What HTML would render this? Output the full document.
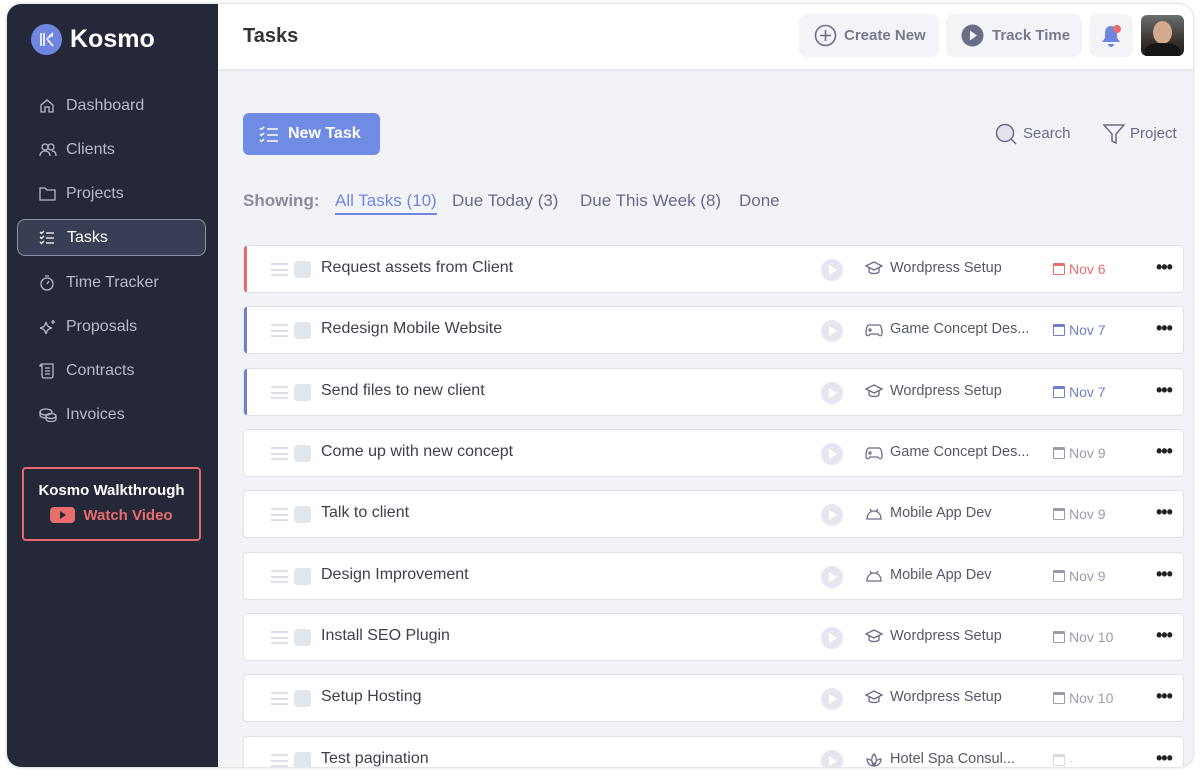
<!DOCTYPE html>
<html><head><meta charset="utf-8"><style>
*{box-sizing:border-box;margin:0;padding:0}
body{width:1200px;height:776px;background:#fff;font-family:"Liberation Sans",sans-serif;position:relative;overflow:hidden}
.frame{position:absolute;left:7px;top:4px;width:1186px;height:763px;border-radius:14px;overflow:hidden;background:#f2f3f7;box-shadow:0 0 3px rgba(0,0,0,.25)}
.side{position:absolute;left:0;top:0;width:211px;height:100%;background:#252838}
.logo{position:absolute;left:24px;top:20px;width:31px;height:31px;border-radius:50%;background:#6f86e0}
.brand{position:absolute;left:63px;top:21px;color:#fff;font-size:25px;font-weight:bold}
.nav{position:absolute;left:10px;width:189px;height:37px;color:#b6b9c8;font-size:16px;line-height:37px;padding-left:49px}
.nav svg{position:absolute;left:22px;top:11px}
.nav.act{background:#3a3e54;border:1px solid #8e92a6;border-radius:8px;color:#fff;line-height:35px}
.nav.act svg{left:21px;top:10px}
.walk{position:absolute;left:15px;top:463px;width:179px;height:74px;border:2px solid #e26a6a;border-radius:4px;text-align:center;color:#fff;font-weight:bold;font-size:15px;padding-top:13px}
.walk .wv{color:#e86d6d;margin-top:8px;font-size:15px}
.yt{display:inline-block;width:25px;height:16px;background:#e86d6d;border-radius:4px;vertical-align:-3px;margin-right:8px;position:relative}
.yt:after{content:"";position:absolute;left:10px;top:4px;border-left:6px solid #252838;border-top:4px solid transparent;border-bottom:4px solid transparent}
.head{position:absolute;left:211px;top:0;right:0;height:65px;background:#fff;box-shadow:0 1px 3px rgba(0,0,0,.1)}
.title{position:absolute;left:25px;top:21px;font-size:20px;font-weight:bold;color:#333}
.hb{position:absolute;top:10px;height:43px;background:#f3f4f8;border-radius:8px;color:#777a8c;font-size:15px;font-weight:bold;line-height:43px}
.main{position:absolute;left:211px;top:65px;right:0;bottom:0}
.nt{position:absolute;left:25px;top:44px;width:137px;height:42px;background:#6f8be3;border-radius:6px;color:#fff;font-weight:bold;font-size:16px;line-height:42px;padding-left:45px}
.tab{position:absolute;top:122px;font-size:17px;color:#676a8a;white-space:nowrap}
.row{position:absolute;left:25px;width:941px;height:48px;background:#fff;border:1px solid #dfe1ea;border-radius:4px;overflow:hidden}
.row.r:before,.row.b:before{content:"";position:absolute;left:0;top:0;bottom:0;width:3px;background:#e26a6a}
.row.b:before{background:#6f80c8}
.drag{position:absolute;left:27px;top:17px;width:17px;height:13px;border-top:2px solid #dde0e8;border-bottom:2px solid #dde0e8}
.drag:after{content:"";position:absolute;left:0;right:0;top:3.5px;height:2px;background:#dde0e8}
.cb{position:absolute;left:50px;top:15px;width:17px;height:17px;background:#e3e5ec;border-radius:3px}
.tn{position:absolute;left:77px;top:13px;font-size:16px;color:#3d3f4f}
.play{position:absolute;left:577px;top:13px;width:22px;height:22px;border-radius:50%;background:#e6e7ee}
.play:after{content:"";position:absolute;left:8px;top:6px;border-left:8px solid #fff;border-top:5px solid transparent;border-bottom:5px solid transparent}
.proj{position:absolute;left:621px;top:14px;font-size:14.5px;color:#555868}
.proj svg{position:absolute;left:0;top:1px}
.proj span{margin-left:25px}
.dt{position:absolute;left:809px;top:15px;font-size:14px;color:#9a9cab}
.cal{display:inline-block;width:12px;height:12px;border:1.5px solid currentColor;border-top-width:3px;border-radius:1px;margin-right:4px;vertical-align:-1px}
.dots{position:absolute;left:912px;top:16px;font-size:18px;font-weight:bold;letter-spacing:-1px;color:#222;line-height:10px}
</style></head><body><div class="frame">
<div class="side">
<div class="logo"><svg width="31" height="31" viewBox="0 0 31 31" fill="none" stroke="#fff" stroke-width="1.6"><path d="M10 9v13M13 9v13M16 15l6-6M16 15l6 7M18 12h4"/></svg></div>
<div class="brand">Kosmo</div>
<div class="nav" style="top:83px"><svg width="16" height="16" viewBox="0 0 16 16" fill="none" stroke="#b6b9c8" stroke-width="1.3"><path d="M2 7l6-5 6 5v7H10V9H6v5H2z"/></svg>Dashboard</div>
<div class="nav" style="top:127px"><svg width="18" height="16" viewBox="0 0 18 16" fill="none" stroke="#b6b9c8" stroke-width="1.3"><circle cx="6" cy="5" r="3"/><circle cx="12" cy="5" r="3"/><path d="M1 14c0-3 2-5 5-5s5 2 5 5M13 9c3 0 4 2 4 5"/></svg>Clients</div>
<div class="nav" style="top:171px"><svg width="17" height="15" viewBox="0 0 17 15" fill="none" stroke="#b6b9c8" stroke-width="1.3"><path d="M1 2h5l2 2h8v10H1z"/></svg>Projects</div>
<div class="nav act" style="top:215px"><svg width="16" height="15" viewBox="0 0 16 15" fill="none" stroke="#fff" stroke-width="1.3"><path d="M1 2l1.5 1.5L5 1M1 7l1.5 1.5L5 6M1 12l1.5 1.5L5 11M7 3h8M7 8h8M7 13h8"/></svg>Tasks</div>
<div class="nav" style="top:260px"><svg width="16" height="16" viewBox="0 0 16 16" fill="none" stroke="#b6b9c8" stroke-width="1.3"><circle cx="8" cy="9" r="6"/><path d="M6 1h4M8 9l2-3"/></svg>Time Tracker</div>
<div class="nav" style="top:304px"><svg width="17" height="17" viewBox="0 0 17 17" fill="none" stroke="#b6b9c8" stroke-width="1.3"><path d="M7 3c1 4 2 5 6 6-4 1-5 2-6 6-1-4-2-5-6-6 4-1 5-2 6-6zM14 1v4M12 3h4"/></svg>Proposals</div>
<div class="nav" style="top:348px"><svg width="16" height="16" viewBox="0 0 16 16" fill="none" stroke="#b6b9c8" stroke-width="1.3"><path d="M3 1h11v12a2 2 0 01-2 2H5M3 1a2 2 0 00-2 2h2M3 1v12a2 2 0 002 2M6 5h5M6 8h5M6 11h5"/></svg>Contracts</div>
<div class="nav" style="top:392px"><svg width="18" height="15" viewBox="0 0 18 15" fill="none" stroke="#b6b9c8" stroke-width="1.3"><ellipse cx="7" cy="5" rx="6" ry="3"/><path d="M1 5v3c0 2 3 3 6 3"/><ellipse cx="12" cy="9" rx="5" ry="2.5"/><path d="M7 9v3c0 1.5 2 2.5 5 2.5s5-1 5-2.5V9"/></svg>Invoices</div>
<div class="walk">Kosmo Walkthrough<div class="wv"><span class="yt"></span>Watch Video</div></div>
</div>
<div class="head"><div class="title">Tasks</div>
<div class="hb" style="left:581px;width:140px;padding-left:45px"><svg style="position:absolute;left:15px;top:10px" width="23" height="23" viewBox="0 0 23 23" fill="none" stroke="#6a6d88" stroke-width="1.6"><circle cx="11.5" cy="11.5" r="10"/><path d="M11.5 6v11M6 11.5h11"/></svg>Create New</div>
<div class="hb" style="left:728px;width:136px;padding-left:46px"><svg style="position:absolute;left:15px;top:10px" width="23" height="23" viewBox="0 0 23 23"><circle cx="11.5" cy="11.5" r="11" fill="#6a6d88"/><path d="M9 6.5l7 5-7 5z" fill="#f3f4f8"/></svg>Track Time</div>
<div class="hb" style="left:871px;width:44px"><svg style="position:absolute;left:10px;top:10px" width="24" height="24" viewBox="0 0 24 24"><path d="M12 2c4 0 6 3 6 7v5l3 4H3l3-4V9c0-4 2-7 6-7zM9 20h6a3 3 0 01-6 0z" fill="#6f86e0"/><circle cx="18" cy="5" r="4" fill="#e86d6d"/></svg></div>
<div style="position:absolute;left:923px;top:11px;width:43px;height:41px;border-radius:6px;background:linear-gradient(#6b6f70,#3b3530 60%,#1a1a1a);overflow:hidden"><div style="position:absolute;left:12px;top:6px;width:19px;height:23px;border-radius:50%;background:#d5a98d"></div><div style="position:absolute;left:4px;top:28px;width:35px;height:20px;border-radius:40%;background:#151515"></div></div>
</div>
<div class="main">
<div class="nt"><svg style="position:absolute;left:16px;top:13px" width="20" height="16" viewBox="0 0 20 16" fill="none" stroke="#fff" stroke-width="1.5"><path d="M1 2l1.5 1.5L5 1M1 8l1.5 1.5L5 7M1 14l1.5 1.5L5 13M8 3h11M8 9h11M8 15h11"/></svg>New Task</div>
<div style="position:absolute;left:777px;top:56px;font-size:15px;color:#676a8a"><svg style="position:absolute;left:0;top:-2px" width="24" height="24" viewBox="0 0 24 24" fill="none" stroke="#6a6d88" stroke-width="1.5"><circle cx="10" cy="10" r="8.5" fill="#e1e2ec"/><path d="M16 16l5 5"/></svg><span style="margin-left:28px">Search</span></div>
<div style="position:absolute;left:885px;top:56px;font-size:15px;color:#676a8a"><svg style="position:absolute;left:0;top:-2px" width="22" height="22" viewBox="0 0 22 22" fill="none" stroke="#6a6d88" stroke-width="1.5"><path d="M1 2h20l-8 9v9l-4-2v-7z"/></svg><span style="margin-left:27px">Project</span></div>
<div class="tab" style="left:25px;color:#8a8c9c;font-weight:bold">Showing:</div>
<div class="tab" style="left:117px;color:#6f86e0;border-bottom:2px solid #6f86e0;padding-bottom:2px">All Tasks (10)</div>
<div class="tab" style="left:234px">Due Today (3)</div>
<div class="tab" style="left:362px">Due This Week (8)</div>
<div class="tab" style="left:521px">Done</div>
<div class="row r" style="top:176px"><div class="drag"></div><div class="cb"></div><div class="tn">Request assets from Client</div><div class="play"></div><div class="proj"><svg width="18" height="16" viewBox="0 0 18 16" fill="none" stroke="#6a6d88" stroke-width="1.3"><path d="M1 5l8-4 8 4-8 4zM4 7v4c2 2 8 2 10 0V7"/></svg><span>Wordpress Setup</span></div><div class="dt" style="color:#e86d6d"><i class="cal"></i>Nov 6</div><div class="dots">•••</div></div>
<div class="row b" style="top:237px"><div class="drag"></div><div class="cb"></div><div class="tn">Redesign Mobile Website</div><div class="play"></div><div class="proj"><svg width="18" height="16" viewBox="0 0 18 16" fill="none" stroke="#6a6d88" stroke-width="1.3"><path d="M4 3h10c2 0 3 4 3 8s-3 3-4 1H5c-1 2-4 3-4-1s1-8 3-8zM5 6v4M3 8h4"/></svg><span>Game Concept Des...</span></div><div class="dt" style="color:#6f80c8"><i class="cal"></i>Nov 7</div><div class="dots">•••</div></div>
<div class="row b" style="top:299px"><div class="drag"></div><div class="cb"></div><div class="tn">Send files to new client</div><div class="play"></div><div class="proj"><svg width="18" height="16" viewBox="0 0 18 16" fill="none" stroke="#6a6d88" stroke-width="1.3"><path d="M1 5l8-4 8 4-8 4zM4 7v4c2 2 8 2 10 0V7"/></svg><span>Wordpress Setup</span></div><div class="dt" style="color:#6f80c8"><i class="cal"></i>Nov 7</div><div class="dots">•••</div></div>
<div class="row" style="top:360px"><div class="drag"></div><div class="cb"></div><div class="tn">Come up with new concept</div><div class="play"></div><div class="proj"><svg width="18" height="16" viewBox="0 0 18 16" fill="none" stroke="#6a6d88" stroke-width="1.3"><path d="M4 3h10c2 0 3 4 3 8s-3 3-4 1H5c-1 2-4 3-4-1s1-8 3-8zM5 6v4M3 8h4"/></svg><span>Game Concept Des...</span></div><div class="dt"><i class="cal"></i>Nov 9</div><div class="dots">•••</div></div>
<div class="row" style="top:421px"><div class="drag"></div><div class="cb"></div><div class="tn">Talk to client</div><div class="play"></div><div class="proj"><svg width="18" height="16" viewBox="0 0 18 16" fill="none" stroke="#6a6d88" stroke-width="1.3"><path d="M2 13c0-5 3-8 7-8s7 3 7 8zM5 3l2 3M13 3l-2 3"/></svg><span>Mobile App Dev</span></div><div class="dt"><i class="cal"></i>Nov 9</div><div class="dots">•••</div></div>
<div class="row" style="top:483px"><div class="drag"></div><div class="cb"></div><div class="tn">Design Improvement</div><div class="play"></div><div class="proj"><svg width="18" height="16" viewBox="0 0 18 16" fill="none" stroke="#6a6d88" stroke-width="1.3"><path d="M2 13c0-5 3-8 7-8s7 3 7 8zM5 3l2 3M13 3l-2 3"/></svg><span>Mobile App Dev</span></div><div class="dt"><i class="cal"></i>Nov 9</div><div class="dots">•••</div></div>
<div class="row" style="top:544px"><div class="drag"></div><div class="cb"></div><div class="tn">Install SEO Plugin</div><div class="play"></div><div class="proj"><svg width="18" height="16" viewBox="0 0 18 16" fill="none" stroke="#6a6d88" stroke-width="1.3"><path d="M1 5l8-4 8 4-8 4zM4 7v4c2 2 8 2 10 0V7"/></svg><span>Wordpress Setup</span></div><div class="dt"><i class="cal"></i>Nov 10</div><div class="dots">•••</div></div>
<div class="row" style="top:605px"><div class="drag"></div><div class="cb"></div><div class="tn">Setup Hosting</div><div class="play"></div><div class="proj"><svg width="18" height="16" viewBox="0 0 18 16" fill="none" stroke="#6a6d88" stroke-width="1.3"><path d="M1 5l8-4 8 4-8 4zM4 7v4c2 2 8 2 10 0V7"/></svg><span>Wordpress Setup</span></div><div class="dt"><i class="cal"></i>Nov 10</div><div class="dots">•••</div></div>
<div class="row" style="top:667px"><div class="drag"></div><div class="cb"></div><div class="tn">Test pagination</div><div class="play"></div><div class="proj"><svg width="18" height="16" viewBox="0 0 18 16" fill="none" stroke="#6a6d88" stroke-width="1.3"><path d="M9 2c3 3 3 9 0 12-3-3-3-9 0-12zM9 14C5 14 2 11 2 7c3 0 6 2 7 7zM9 14c4 0 7-3 7-7-3 0-6 2-7 7z"/></svg><span>Hotel Spa Consul...</span></div><div class="dt" style="color:#d8d9e2"><i class="cal"></i>-</div><div class="dots">•••</div></div>
</div>
</div></body></html>
